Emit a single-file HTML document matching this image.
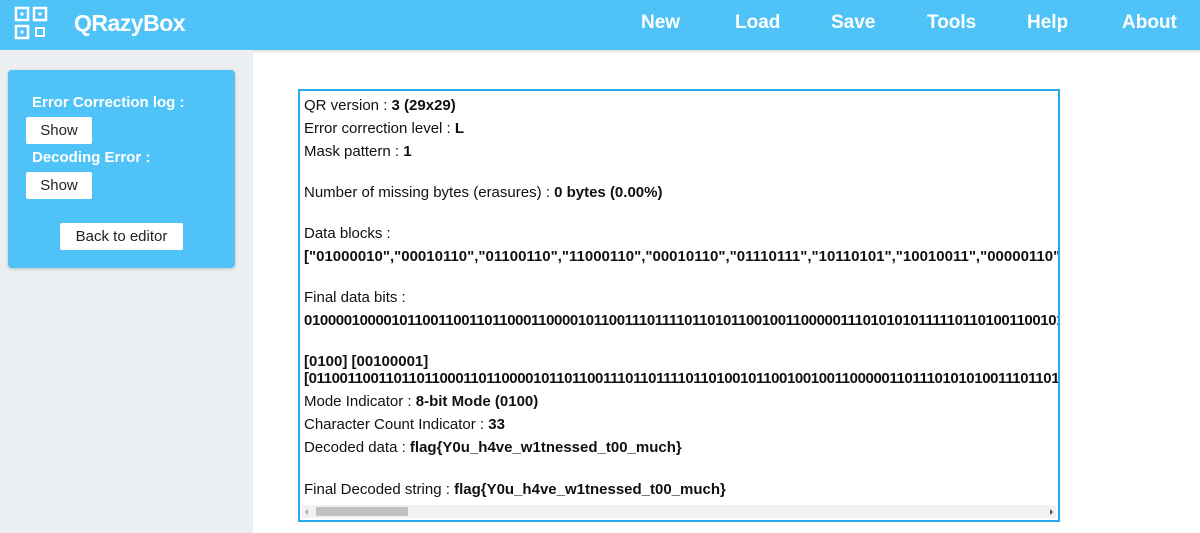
<!DOCTYPE html>
<html><head><meta charset="utf-8"><style>
*{margin:0;padding:0;box-sizing:border-box}
body{width:1200px;height:533px;overflow:hidden;background:#fff;font-family:"Liberation Sans",sans-serif;position:relative}
.hdr{position:absolute;left:0;top:0;width:1200px;height:50px;background:#4fc3f7;box-shadow:0 1px 3px rgba(0,0,0,.2)}
.logo{position:absolute;left:74px;top:10px;color:#fff;font-weight:bold;font-size:23px;letter-spacing:-0.5px}
.nav{position:absolute;top:12px;color:#fff;font-weight:bold;font-size:19px}
.side{position:absolute;left:0;top:50px;width:253px;height:483px;background:#eceff1}
.panel{position:absolute;left:8px;top:70px;width:227px;height:198px;background:#4fc3f7;border-radius:4px;box-shadow:0 1px 3px rgba(0,0,0,.2)}
.lbl{position:absolute;color:#fff;font-weight:bold;font-size:15px}
.btn{position:absolute;background:#fff;border-radius:2px;color:#222;font-size:15px;text-align:center;line-height:27px;height:27px}
.box{position:absolute;left:298px;top:89px;width:762px;height:433px;border:2px solid #29a8f0;overflow:hidden}
.txt{position:absolute;left:4px;top:3px;font-size:15px;line-height:23px;color:#111;white-space:nowrap}
.txt b{font-weight:bold}
.sb{position:absolute;left:2px;bottom:2px;width:754px;height:13px;background:#f1f1f1}
</style></head><body>
<div class="hdr">
<svg style="position:absolute;left:14px;top:6px" width="34" height="34" viewBox="0 0 34 34" fill="none" stroke="#fff" stroke-width="2.5">
<rect x="2" y="2" width="12" height="12"/><rect x="20" y="2" width="12" height="12"/><rect x="2" y="20" width="12" height="12"/><rect x="22" y="22" width="8" height="8" stroke-width="2"/>
<rect x="6.5" y="6.5" width="3" height="3" fill="#fff" stroke="none"/><rect x="24.5" y="6.5" width="3" height="3" fill="#fff" stroke="none"/><rect x="6.5" y="24.5" width="3" height="3" fill="#fff" stroke="none"/>
</svg>
<div class="logo">QRazyBox</div>
<div class="nav" style="left:641px">New</div>
<div class="nav" style="left:735px">Load</div>
<div class="nav" style="left:831px">Save</div>
<div class="nav" style="left:927px">Tools</div>
<div class="nav" style="left:1027px">Help</div>
<div class="nav" style="left:1122px">About</div>
</div>
<div class="side"></div>
<div class="panel">
<div class="lbl" style="left:24px;top:24px">Error Correction log :</div>
<div class="btn" style="left:18px;top:47px;width:66px">Show</div>
<div class="lbl" style="left:24px;top:79px">Decoding Error :</div>
<div class="btn" style="left:18px;top:102px;width:66px">Show</div>
<div class="btn" style="left:52px;top:153px;width:123px">Back to editor</div>
</div>
<div class="box">
<div class="txt">
QR version : <b>3 (29x29)</b><br>
Error correction level : <b>L</b><br>
Mask pattern : <b>1</b><br>
<div style="height:18px"></div>
Number of missing bytes (erasures) : <b>0 bytes (0.00%)</b><br>
<div style="height:18px"></div>
Data blocks :<br>
<b>["01000010","00010110","01100110","11000110","00010110","01110111","10110101","10010011","00000110","11010101"]</b><br>
<div style="height:18px"></div>
Final data bits :<br>
<b style="letter-spacing:-0.4px">01000010000101100110011011000110000101100111011110110101100100110000011101010101111101101001100101101011010</b><br>
<div style="height:18px"></div>
<b>[0100] [00100001]</b><br>
<div style="margin-top:-6px"><b style="letter-spacing:-0.4px">[01100110011011011000110110000101101100111011011110110100101100100100110000011011101010100111011010110</b></div>
Mode Indicator : <b>8-bit Mode (0100)</b><br>
Character Count Indicator : <b>33</b><br>
Decoded data : <b>flag{Y0u_h4ve_w1tnessed_t00_much}</b><br>
<div style="height:19px"></div>
Final Decoded string : <b>flag{Y0u_h4ve_w1tnessed_t00_much}</b>
</div>
<div class="sb"><div style="position:absolute;left:14px;top:2px;width:92px;height:9px;background:#c1c1c1"></div>
<div style="position:absolute;left:3px;top:4px;border:3px solid transparent;border-right-color:#aaa;border-left:0"></div>
<div style="position:absolute;right:3px;top:4px;border:3px solid transparent;border-left-color:#555;border-right:0"></div></div>
</div>
</body></html>
